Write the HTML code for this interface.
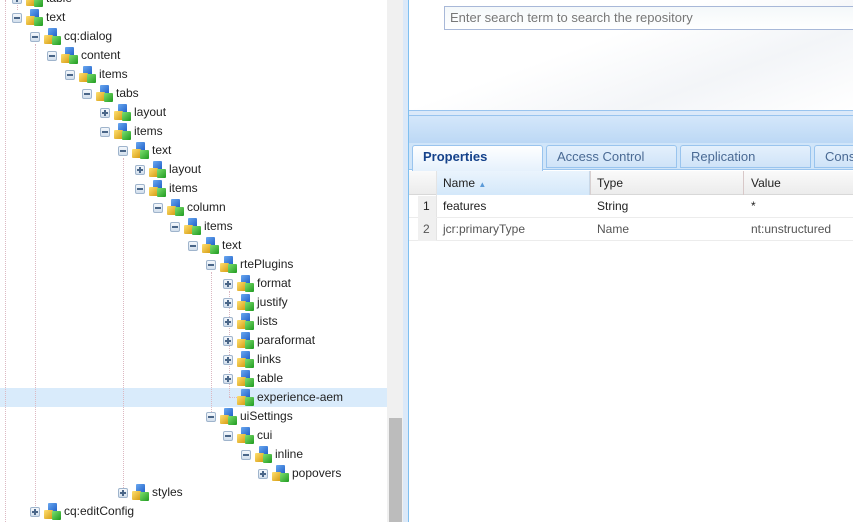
<!DOCTYPE html>
<html><head><meta charset="utf-8"><style>
*{margin:0;padding:0;box-sizing:border-box}
body{width:853px;height:522px;overflow:hidden;background:#fff;font-family:"Liberation Sans",Arial,sans-serif;font-size:12px;color:#222;position:relative}
.r{position:absolute;height:19px;line-height:19px;white-space:nowrap}
.t{position:absolute;top:5px;width:10px;height:10px;border:1px solid #9fb4cc;background:linear-gradient(#f4f8fc,#d2deec);border-radius:2px}
.t:before{content:"";position:absolute;left:1px;top:3px;width:6px;height:2px;background:#4a6688}
.t.p:after{content:"";position:absolute;left:3px;top:1px;width:2px;height:6px;background:#4a6688}
.i{position:absolute;top:1px;width:17px;height:17px}
.i b{position:absolute;display:block;width:9px;height:9px;border-radius:1px}
.i .bl{left:4px;top:0;background:linear-gradient(135deg,#6aa8f0,#1f5fc8)}
.i .ye{left:0;top:7px;background:linear-gradient(135deg,#ffe070,#d49a10)}
.i .gr{left:8px;top:8px;background:linear-gradient(135deg,#7fe070,#1f9a20)}
.l{position:absolute;top:0}
.v{position:absolute;width:0;border-left:1px dotted #dcb8c2}
.tab{position:absolute;top:145px;height:23px;background:linear-gradient(#e4f0fc,#cfe3f8);border:1px solid #99c4ee;border-radius:3px 3px 0 0;color:#4a6a94;line-height:21px;padding-left:10px;font-size:13px;white-space:nowrap;overflow:hidden}
</style></head><body>
<div style="position:absolute;left:0;top:388px;width:388px;height:19px;background:#d9ebfb"></div>
<div class="v" style="left:5px;top:0;height:522px"></div>
<div class="v" style="left:17px;top:0;height:10px"></div>
<div class="v" style="left:35px;top:44px;height:468px"></div>
<div class="v" style="left:123px;top:158px;height:334px"></div>
<div class="v" style="left:211px;top:272px;height:144px"></div>
<div class="v" style="left:229px;top:291px;height:106px"></div>
<div class="v" style="left:229px;top:397px;width:10px;height:0;border-left:0;border-top:1px dotted #dcb8c2"></div>

<div id="tree"></div>
<script>
var rows=[["table",0,"p"],["text",0,"m"],["cq:dialog",1,"m"],["content",2,"m"],["items",3,"m"],["tabs",4,"m"],["layout",5,"p"],["items",5,"m"],["text",6,"m"],["layout",7,"p"],["items",7,"m"],["column",8,"m"],["items",9,"m"],["text",10,"m"],["rtePlugins",11,"m"],["format",12,"p"],["justify",12,"p"],["lists",12,"p"],["paraformat",12,"p"],["links",12,"p"],["table",12,"p"],["experience-aem",12,""],["uiSettings",11,"m"],["cui",12,"m"],["inline",13,"m"],["popovers",14,"p"],["styles",6,"p"],["cq:editConfig",1,"p"]];
var h="";
rows.forEach(function(r,k){var c=-2+19*k;var L=Math.round(46+r[1]*17.6);var top=c-9;
h+='<div class="r" style="top:'+top+'px;left:0;width:388px">';
if(r[2])h+='<span class="t '+(r[2]=="p"?"p":"")+'" style="left:'+(L-34)+'px"></span>';
h+='<span class="i" style="left:'+(L-20)+'px"><b class="bl"></b><b class="ye"></b><b class="gr"></b></span><span class="l" style="left:'+L+'px">'+r[0]+'</span></div>';});
document.getElementById("tree").innerHTML=h;
</script>

<div style="position:absolute;left:387px;top:0;width:16px;height:522px;background:#f0f0f0"></div>
<div style="position:absolute;left:389px;top:418px;width:13px;height:104px;background:#bcbcbc"></div>
<div style="position:absolute;left:403px;top:0;width:5px;height:522px;background:#dbe9f9"></div>
<div style="position:absolute;left:408px;top:0;width:1px;height:522px;background:#7fbfef"></div>

<div style="position:absolute;left:409px;top:0;width:444px;height:110px;background:linear-gradient(160deg,#fff 40%,#f3f5f8 70%,#fff 100%)"></div>
<div style="position:absolute;left:444px;top:6px;width:420px;height:24px;border:1px solid #a8b8d8;background:linear-gradient(#f4f8fa,#fff);color:#777;font-size:13px;line-height:22px;padding-left:5px">Enter search term to search the repository</div>
<div style="position:absolute;left:409px;top:110px;width:444px;height:1px;background:#99c4ee"></div>
<div style="position:absolute;left:409px;top:111px;width:444px;height:4px;background:#dbe9f9"></div>
<div style="position:absolute;left:409px;top:115px;width:444px;height:1px;background:#99c4ee"></div>
<div style="position:absolute;left:409px;top:116px;width:444px;height:27px;background:linear-gradient(#d4e7fa,#bcd8f5)"></div>
<div style="position:absolute;left:409px;top:143px;width:444px;height:27px;background:#d0e5f9;border-bottom:1px solid #99c4ee"></div>
<div style="position:absolute;left:412px;top:145px;width:131px;height:26px;background:linear-gradient(#fff,#e6f1fc);border:1px solid #99c4ee;border-bottom:0;border-radius:3px 3px 0 0;font-weight:bold;color:#15428b;line-height:21px;padding-left:10px;font-size:13px">Properties</div>
<div class="tab" style="left:546px;width:131px">Access Control</div>
<div class="tab" style="left:680px;width:131px">Replication</div>
<div class="tab" style="left:814px;width:60px">Console</div>

<div style="position:absolute;left:409px;top:171px;width:444px;height:24px;background:linear-gradient(#fafafa,#ececec);border-bottom:1px solid #d8d8d8"></div>
<div style="position:absolute;left:437px;top:171px;width:153px;height:24px;background:linear-gradient(#eaf4fd,#d4e8fa);border-right:1px solid #c8d8e8"></div>
<div style="position:absolute;left:436px;top:171px;width:1px;height:70px;background:#e4e4e4"></div>
<div style="position:absolute;left:590px;top:171px;width:1px;height:24px;background:#d8d0d0"></div>
<div style="position:absolute;left:743px;top:171px;width:1px;height:24px;background:#d8c8c8"></div>
<div style="position:absolute;left:443px;top:171px;line-height:24px">Name <span style="color:#5b9ad8;font-size:8px">&#9650;</span></div>
<div style="position:absolute;left:597px;top:171px;line-height:24px">Type</div>
<div style="position:absolute;left:751px;top:171px;line-height:24px">Value</div>
<div style="position:absolute;left:409px;top:196px;width:444px;height:22px;border-bottom:1px solid #ececec"></div>
<div style="position:absolute;left:409px;top:218px;width:444px;height:23px;border-bottom:1px solid #ececec"></div>
<div style="position:absolute;left:418px;top:196px;width:18px;height:45px;background:#f0f0f0"></div>
<div style="position:absolute;left:409px;top:196px;line-height:20px;width:444px">
<span style="position:absolute;left:14px">1</span><span style="position:absolute;left:34px">features</span><span style="position:absolute;left:188px">String</span><span style="position:absolute;left:342px">*</span></div>
<div style="position:absolute;left:409px;top:219px;line-height:20px;width:444px;color:#555">
<span style="position:absolute;left:14px">2</span><span style="position:absolute;left:34px">jcr:primaryType</span><span style="position:absolute;left:188px">Name</span><span style="position:absolute;left:342px">nt:unstructured</span></div>
</body></html>
